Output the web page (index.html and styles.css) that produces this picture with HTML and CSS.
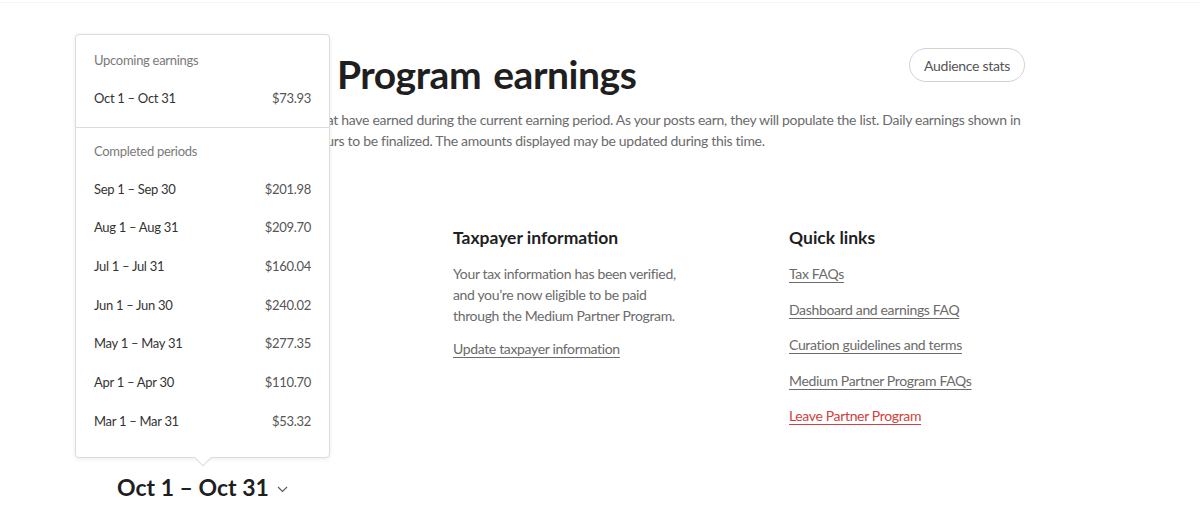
FILE: index.html
```html
<!DOCTYPE html>
<html lang="en">
<head>
<meta charset="utf-8">
<title>Program earnings</title>
<link rel="stylesheet" href="styles.css">
</head>
<body>
<div class="topbar"></div>
<main class="page">
  <header class="head">
    <h1 class="title"><span class="title-lead">Your Partner </span>Program earnings</h1>
    <button class="pill">Audience stats</button>
  </header>
  <p class="intro">Below are the stories and reposts that have earned during the current earning period. As your posts earn, they will populate the list. Daily earnings shown in this view can take up to 24 to 72 hours to be finalized. The amounts displayed may be updated during this time.</p>

  <section class="cols">
    <div class="col col-left">
      <div class="picker">
        <button class="picker-btn">Oct 1 – Oct 31
          <svg class="chev" width="11" height="7" viewBox="0 0 11 7"><path d="M1 1l4.5 4.5L10 1" fill="none" stroke="#555" stroke-width="1.1"/></svg>
        </button>
        <div class="menu">
          <div class="menu-sec">
            <div class="menu-label">Upcoming earnings</div>
            <div class="menu-row"><span>Oct 1 – Oct 31</span><span>$73.93</span></div>
          </div>
          <div class="menu-sec menu-sec-b">
            <div class="menu-label">Completed periods</div>
            <div class="menu-row"><span>Sep 1 – Sep 30</span><span>$201.98</span></div>
            <div class="menu-row"><span>Aug 1 – Aug 31</span><span>$209.70</span></div>
            <div class="menu-row"><span>Jul 1 – Jul 31</span><span>$160.04</span></div>
            <div class="menu-row"><span>Jun 1 – Jun 30</span><span>$240.02</span></div>
            <div class="menu-row"><span>May 1 – May 31</span><span>$277.35</span></div>
            <div class="menu-row"><span>Apr 1 – Apr 30</span><span>$110.70</span></div>
            <div class="menu-row"><span>Mar 1 – Mar 31</span><span>$53.32</span></div>
          </div>
          <span class="menu-arrow"></span>
        </div>
      </div>
    </div>
    <div class="col">
      <h2 class="col-title">Taxpayer information</h2>
      <p class="col-text">Your tax information has been verified, and you’re now eligible to be paid through the Medium Partner Program.</p>
      <a class="link" href="#">Update taxpayer information</a>
    </div>
    <div class="col">
      <h2 class="col-title">Quick links</h2>
      <ul class="links">
        <li><a class="link" href="#">Tax FAQs</a></li>
        <li><a class="link" href="#">Dashboard and earnings FAQ</a></li>
        <li><a class="link" href="#">Curation guidelines and terms</a></li>
        <li><a class="link" href="#">Medium Partner Program FAQs</a></li>
        <li><a class="link link-red" href="#">Leave Partner Program</a></li>
      </ul>
    </div>
  </section>
</main>
</body>
</html>
```

FILE: styles.css
```css
* { box-sizing: border-box; }
html, body { margin: 0; padding: 0; background: #fff; }
body {
  font-family: Lato, "Open Sans", sans-serif;
  color: #292929;
  overflow: hidden;
}
.topbar {
  height: 3px;
  border-bottom: 1px solid #f6f6f6;
}
.page {
  margin-left: 117px;
  width: 908px;
  padding-top: 44px;
}
.head {
  display: flex;
  justify-content: space-between;
  align-items: flex-start;
}
.title {
  margin: 0;
  font-size: 39px;
  line-height: 54px;
  font-weight: 700;
  color: #1f1f1f;
  letter-spacing: -0.45px;
  word-spacing: 3px;
  white-space: nowrap;
}
.title-lead { letter-spacing: -1px; }
.pill {
  margin-top: 1px;
  height: 34px;
  padding: 0 14px;
  border: 1px solid #d3d3d3;
  border-radius: 18px;
  background: #fff;
  font-family: inherit;
  font-size: 14px;
  letter-spacing: -0.3px;
  color: #555;
}
.intro {
  margin: 8px 0 0;
  width: 906px;
  font-size: 14px;
  line-height: 21px;
  letter-spacing: -0.3px;
  color: #6b6b6b;
}
.cols {
  display: flex;
  gap: 36px;
  margin-top: 74px;
}
.col { width: 300px; }
.col:last-child { width: 236px; }
.col-left { width: 200px; }
.col-left + .col { margin-left: 100px; }
.col-title {
  margin: 0;
  font-size: 17.5px;
  line-height: 26px;
  font-weight: 700;
  color: #1f1f1f;
}
.col-text {
  margin: 12px 0 0;
  font-size: 14px;
  line-height: 21px;
  letter-spacing: -0.35px;
  color: #6b6b6b;
  width: 240px;
}
.link {
  display: inline-block;
  margin-top: 12px;
  font-size: 14px;
  line-height: 21px;
  letter-spacing: -0.35px;
  color: #6b6b6b;
  text-decoration: underline;
  text-underline-offset: 3px;
  text-decoration-thickness: 1px;
}
.links {
  list-style: none;
  margin: 12px 0 0;
  padding: 0;
}
.links li { height: 35.5px; }
.links .link { margin-top: 0; }
.link-red { color: #d04040; }
.picker {
  position: relative;
  width: 170px;
  margin-top: 246px;
}
.picker-btn {
  display: flex;
  align-items: center;
  gap: 8px;
  padding: 0;
  border: 0;
  background: none;
  font-family: inherit;
  font-size: 23px;
  line-height: 32px;
  font-weight: 700;
  color: #1f1f1f;
  white-space: nowrap;
}
.chev { margin-top: 4px; }
.menu {
  position: absolute;
  left: -42px;
  bottom: 45px;
  width: 255px;
  background: #fff;
  border: 1px solid #dcdcdc;
  border-radius: 4px;
  box-shadow: 0 1px 4px rgba(0,0,0,0.08);
}
.menu-sec { padding: 15px 18px 10px; }
.menu-sec > .menu-label { margin-bottom: 9px; }
.menu-sec-b {
  border-top: 1px solid #dcdcdc;
  padding: 13px 18px 17px;
}
.menu-sec-b > .menu-label { margin-bottom: 8px; }
.menu-label {
  height: 20px;
  font-size: 13px;
  line-height: 20px;
  letter-spacing: -0.3px;
  color: #7a7a7a;
}
.menu-row {
  display: flex;
  justify-content: space-between;
  align-items: center;
  height: 38.67px;
  font-size: 13px;
  letter-spacing: -0.3px;
  color: #333;
}
.menu-row span:last-child { color: #555; }
.menu-arrow {
  position: absolute;
  left: 121px;
  bottom: -7px;
  width: 12px;
  height: 12px;
  background: #fff;
  border-right: 1px solid #dcdcdc;
  border-bottom: 1px solid #dcdcdc;
  transform: rotate(45deg);
}
```
